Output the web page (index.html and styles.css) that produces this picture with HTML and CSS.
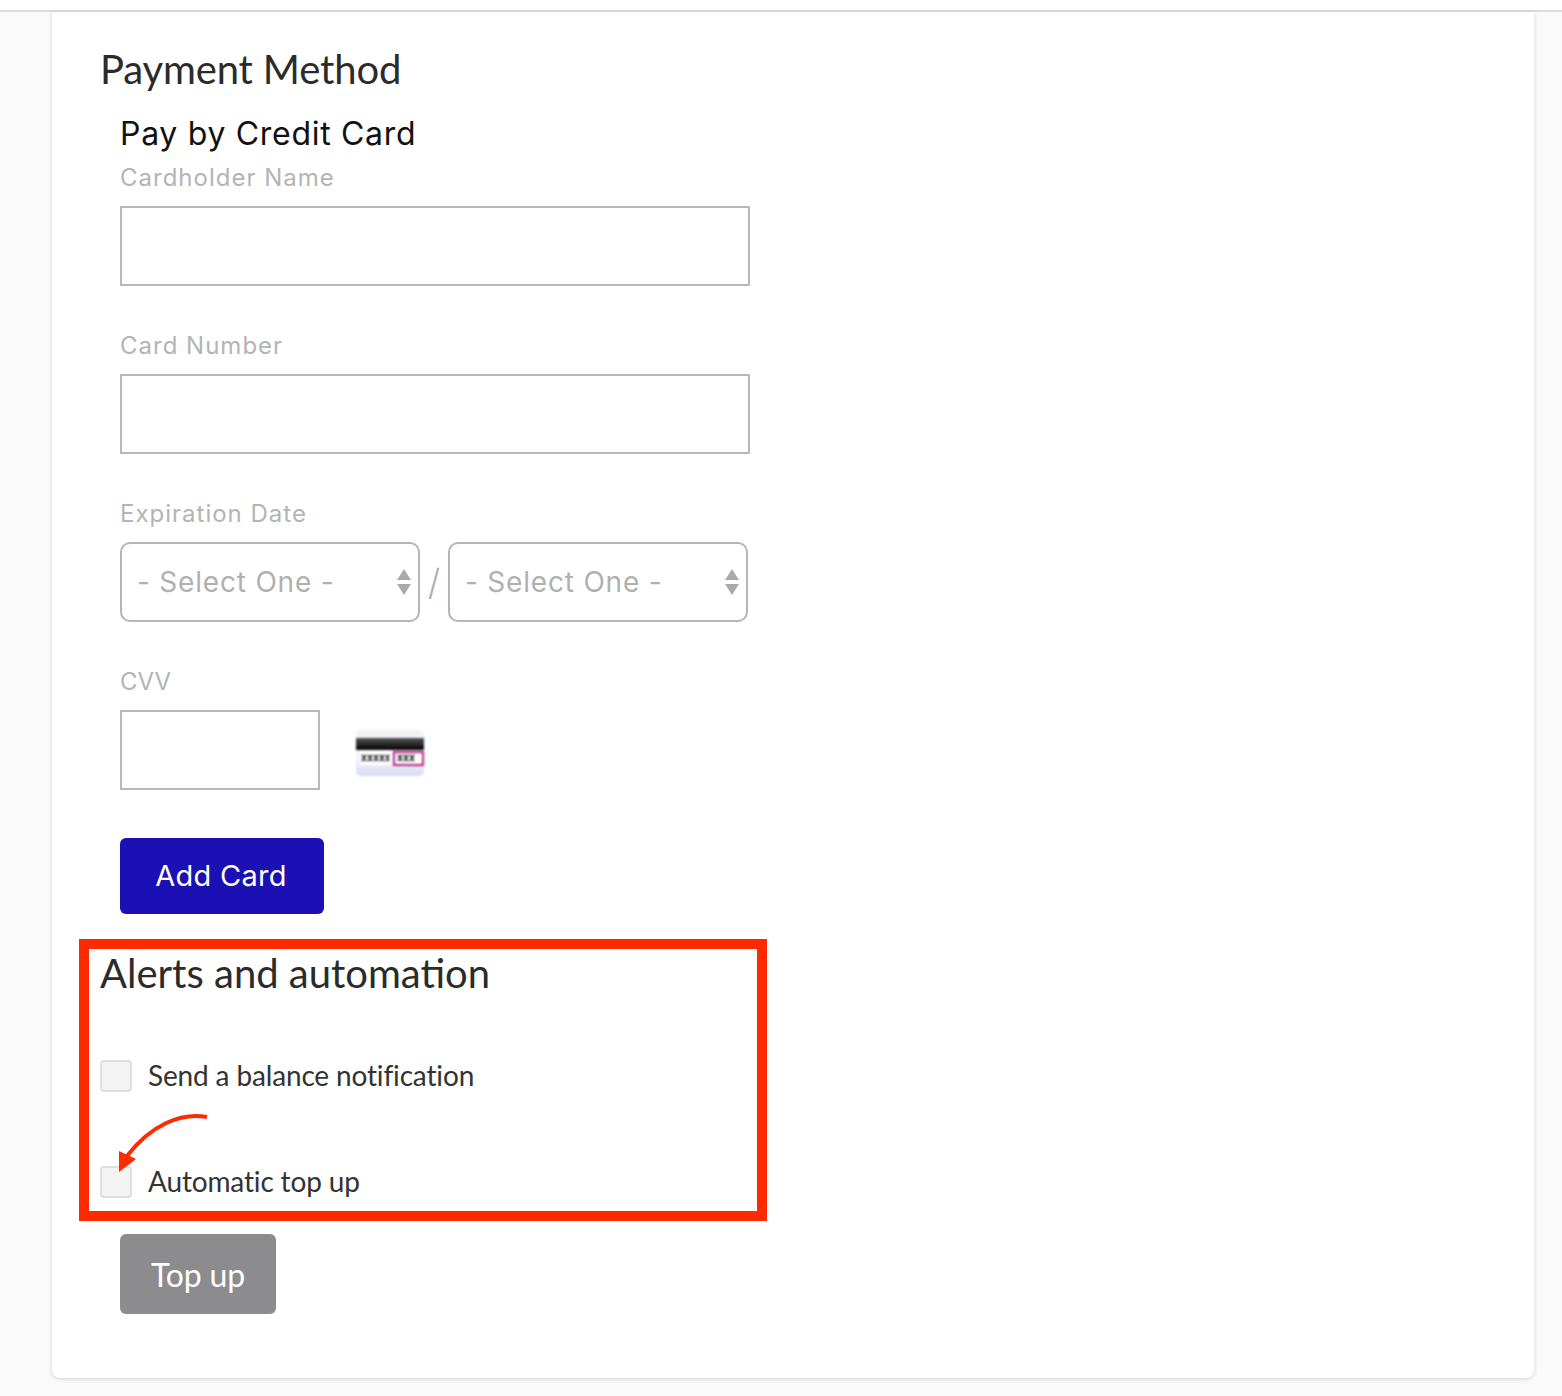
FILE: index.html
```html
<!DOCTYPE html>
<html lang="en">
<head>
<meta charset="utf-8">
<title>Payment Method</title>
<link rel="stylesheet" href="styles.css">
</head>
<body>
<div class="topbar"></div>
<main class="card">
  <h2 class="heading heading-payment">Payment Method</h2>
  <form class="form">
    <h3 class="subheading">Pay by Credit Card</h3>
    <label class="label">Cardholder Name</label>
    <div class="input input-wide"></div>
    <label class="label">Card Number</label>
    <div class="input input-wide"></div>
    <label class="label">Expiration Date</label>
    <div class="date-row">
      <div class="select">
        <span>- Select One -</span>
        <svg class="updown" viewBox="0 0 14 26" width="14" height="26"><path d="M7 0 14 11H0Z M0 15H14L7 26Z" fill="#ababab"/></svg>
      </div>
      <span class="slash">/</span>
      <div class="select">
        <span>- Select One -</span>
        <svg class="updown" viewBox="0 0 14 26" width="14" height="26"><path d="M7 0 14 11H0Z M0 15H14L7 26Z" fill="#ababab"/></svg>
      </div>
    </div>
    <label class="label label-cvv">CVV</label>
    <div class="cvv-row">
      <div class="input input-cvv"></div>
      <svg class="cvv-card" viewBox="0 0 68 46" width="68" height="46">
        <defs>
          <linearGradient id="cardbg" x1="0" y1="0" x2="0" y2="1"><stop offset="0" stop-color="#f1f1f6"/><stop offset=".6" stop-color="#f2f2fb"/><stop offset="1" stop-color="#d9dcf4"/></linearGradient>
          <linearGradient id="stripe" x1="0" y1="0" x2="0" y2="1"><stop offset="0" stop-color="#555"/><stop offset="1" stop-color="#000"/></linearGradient>
        </defs>
        <rect x="0" y="0" width="68" height="46" rx="5" fill="url(#cardbg)"/>
        <rect x="0" y="8" width="68" height="12" fill="url(#stripe)"/>
        <rect x="4" y="20" width="32" height="15" fill="#fff"/>
        <rect x="38" y="22" width="29" height="13" fill="#fff" stroke="#b5247f" stroke-width="2"/>
        <path d="M6 25l4 6m0-6-4 6M12 25l4 6m0-6-4 6M18 25l4 6m0-6-4 6M24 25l4 6m0-6-4 6M30 25l3 6m0-6-3 6M42 25l4 6m0-6-4 6M48 25l4 6m0-6-4 6M54 25l4 6m0-6-4 6" stroke="#222" stroke-width="1.6" fill="none"/>
      </svg>
    </div>
    <button class="btn-add" type="button">Add Card</button>
  </form>
  <section class="alerts">
    <h2 class="heading">Alerts and automation</h2>
    <div class="check check-first"><span class="box"></span><span class="check-text">Send a balance notification</span></div>
    <div class="check check-second"><span class="box"></span><span class="check-text">Automatic top up</span></div>
    <div class="highlight"></div>
    <svg class="arrow" viewBox="0 0 100 70" width="100" height="70">
      <path d="M92 8C66 3 36 16 12 47" fill="none" stroke="#ff2a00" stroke-width="4"/>
      <path d="M4 63V42L21 50Z" fill="#ff2a00"/>
    </svg>
  </section>
  <div class="topup-row"><button class="btn-topup" type="button">Top up</button></div>
</main>
</body>
</html>
```

FILE: styles.css
```css
* { box-sizing: border-box; }
html, body { margin: 0; padding: 0; }
body {
  width: 1562px;
  height: 1396px;
  overflow: hidden;
  background: #fafafa;
  font-family: "Lato", sans-serif;
  color: #2b2b2b;
}
.topbar {
  height: 12px;
  background: #fff;
  border-bottom: 2px solid #dcdcdc;
}
.card {
  margin-left: 52px;
  width: 1482px;
  height: 1366px;
  background: #fff;
  border-radius: 0 0 8px 8px;
  box-shadow: 0 1px 4px rgba(0,0,0,.16);
  padding: 31px 0 0 48px;
}
.heading {
  margin: 0;
  font-size: 40px;
  line-height: 52px;
  font-weight: 400;
  color: #2b2b2b;
}
.heading-payment { letter-spacing: -0.15px; }
.form {
  padding-left: 20px;
  display: flex;
  flex-direction: column;
  align-items: flex-start;
}
.subheading {
  margin: 17px 0 0;
  font-family: "Inter", sans-serif;
  font-size: 32px;
  line-height: 44px;
  letter-spacing: 0.7px;
  font-weight: 400;
  color: #111;
}
.label {
  display: block;
  font-family: "Inter", sans-serif;
  font-size: 24px;
  line-height: 24px;
  letter-spacing: 1px;
  color: #b4b4b4;
  margin: 10px 0 16px;
}
.label-cvv { letter-spacing: 0; }
.input {
  border: 2px solid #b9b9b9;
  height: 80px;
  background: #fff;
  margin-bottom: 38px;
}
.input-wide { width: 630px; }
.input-cvv { width: 200px; margin-bottom: 0; }
.date-row {
  display: flex;
  align-items: center;
  margin-bottom: 38px;
}
.select {
  width: 300px;
  height: 80px;
  border: 2px solid #b5b5b5;
  border-radius: 10px;
  display: flex;
  align-items: center;
  justify-content: space-between;
  padding: 0 7px 0 15px;
  font-family: "Inter", sans-serif;
  font-size: 28px;
  letter-spacing: 0.8px;
  color: #b0b0b0;
}
.slash {
  width: 28px;
  text-align: center;
  font-family: "Inter", sans-serif;
  font-size: 36px;
  font-weight: 300;
  color: #b0b0b0;
}
.cvv-row {
  display: flex;
  align-items: center;
  gap: 36px;
  margin-bottom: 48px;
}
.cvv-card {
  margin-top: 6px;
  filter: blur(0.8px);
}
.btn-add {
  width: 204px;
  height: 76px;
  border: 0;
  border-radius: 6px;
  background: #1a10b3;
  color: #fff;
  font-family: "Inter", sans-serif;
  font-size: 29px;
  letter-spacing: 0.25px;
  padding: 0 2px 1px 0;
}
.alerts {
  position: relative;
  margin-top: 33px;
  height: 261px;
}
.check {
  display: flex;
  align-items: center;
  gap: 16px;
  height: 32px;
  font-size: 28px;
  letter-spacing: -0.15px;
  color: #333;
}
.check-text { margin-bottom: 2px; }
.check-first { margin-top: 61px; }
.check-second { margin-top: 74px; }
.box {
  width: 32px;
  height: 32px;
  background: #f4f4f4;
  border: 2px solid #dedede;
  border-radius: 4px;
}
.highlight {
  position: absolute;
  left: -21px;
  top: -8px;
  width: 688px;
  height: 282px;
  border: 10px solid #ff2a00;
}
.arrow {
  position: absolute;
  left: 15px;
  top: 162px;
}
.topup-row { margin-top: 26px; padding-left: 20px; }
.btn-topup {
  width: 156px;
  height: 80px;
  border: 0;
  border-radius: 6px;
  background: #8c8c8e;
  color: #fff;
  font-family: "Lato", sans-serif;
  font-size: 32px;
  letter-spacing: -0.2px;
  padding: 0;
}
```
